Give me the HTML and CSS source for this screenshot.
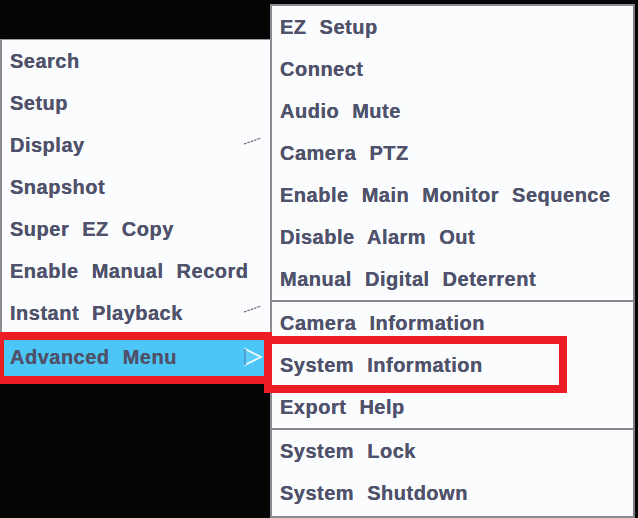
FILE: index.html
```html
<!DOCTYPE html>
<html>
<head>
<meta charset="utf-8">
<link rel="stylesheet" href="styles.css">
</head>
<body>
<div class="screen">
  <div class="menu menu-main">
    <div class="item">Search</div>
    <div class="item">Setup</div>
    <div class="item">Display<svg class="tick" width="20" height="10" viewBox="0 0 20 10"><line x1="1" y1="8" x2="18" y2="2"/></svg></div>
    <div class="item">Snapshot</div>
    <div class="item">Super EZ Copy</div>
    <div class="item">Enable Manual Record</div>
    <div class="item">Instant Playback<svg class="tick" width="20" height="10" viewBox="0 0 20 10"><line x1="1" y1="8" x2="18" y2="2"/></svg></div>
    <div class="item item-active">Advanced Menu<svg class="arrow" width="20" height="20" viewBox="0 0 20 20"><polygon class="arrow-fill" points="2,2 18,10 2,18"/><line class="arrow-left" x1="2" y1="2" x2="2" y2="18"/></svg></div>
  </div>
  <div class="menu menu-sub">
    <div class="item">EZ Setup</div>
    <div class="item">Connect</div>
    <div class="item">Audio Mute</div>
    <div class="item">Camera PTZ</div>
    <div class="item">Enable Main Monitor Sequence</div>
    <div class="item">Disable Alarm Out</div>
    <div class="item">Manual Digital Deterrent</div>
    <div class="sep"></div>
    <div class="item">Camera Information</div>
    <div class="item">System Information</div>
    <div class="item">Export Help</div>
    <div class="sep"></div>
    <div class="item">System Lock</div>
    <div class="item">System Shutdown</div>
  </div>
  <div class="mark mark-left"></div>
  <div class="mark mark-right"></div>
</div>
</body>
</html>
```
FILE: styles.css
```css
html, body {
  margin: 0;
  padding: 0;
  background: #050505;
}
.screen {
  position: relative;
  width: 638px;
  height: 518px;
  overflow: hidden;
  background: #050505;
  font-family: "Liberation Sans", Arial, sans-serif;
  font-weight: bold;
  font-size: 20px;
  letter-spacing: 0.5px;
  color: #4f526a;
  word-spacing: 7px;
}
.menu {
  position: absolute;
  background: #fbfcfe;
  display: flex;
  flex-direction: column;
}
.menu-main {
  left: 0;
  top: 39px;
  width: 268px;
  border-left: 2px solid #8c8c92;
  border-top: 1px solid #9a9aa0;
}
.menu-sub {
  left: 270px;
  top: 4px;
  width: 361px;
  height: 510px;
  border: 2px solid #8a8a92;
  border-right-color: #7d7d86;
}
.item {
  position: relative;
  height: 42px;
  line-height: 42px;
  padding-left: 8px;
  white-space: nowrap;
  text-shadow: 0 0 0.6px #4f526a;
}
.item-active {
  margin-top: 2px;
  background: #4cc6f6;
}
.sep {
  height: 2px;
  background: #86868f;
}
.tick {
  position: absolute;
  left: 241px;
  top: 12px;
}
.tick line {
  stroke: #55555c;
  stroke-width: 1.1;
  stroke-dasharray: 2.5 1;
}
.arrow {
  position: absolute;
  left: 241px;
  top: 11px;
}
.arrow-fill {
  fill: #5ccdf8;
  stroke: #f2faff;
  stroke-width: 1.6;
  stroke-linejoin: miter;
}
.arrow-left {
  stroke: #2f8fc4;
  stroke-width: 1.6;
}
.mark {
  position: absolute;
  border: 8px solid #ec1c24;
  box-sizing: border-box;
}
.mark-left {
  left: -4px;
  top: 332px;
  width: 276px;
  height: 52px;
}
.mark-right {
  left: 264px;
  top: 336px;
  width: 303px;
  height: 57px;
}
```
